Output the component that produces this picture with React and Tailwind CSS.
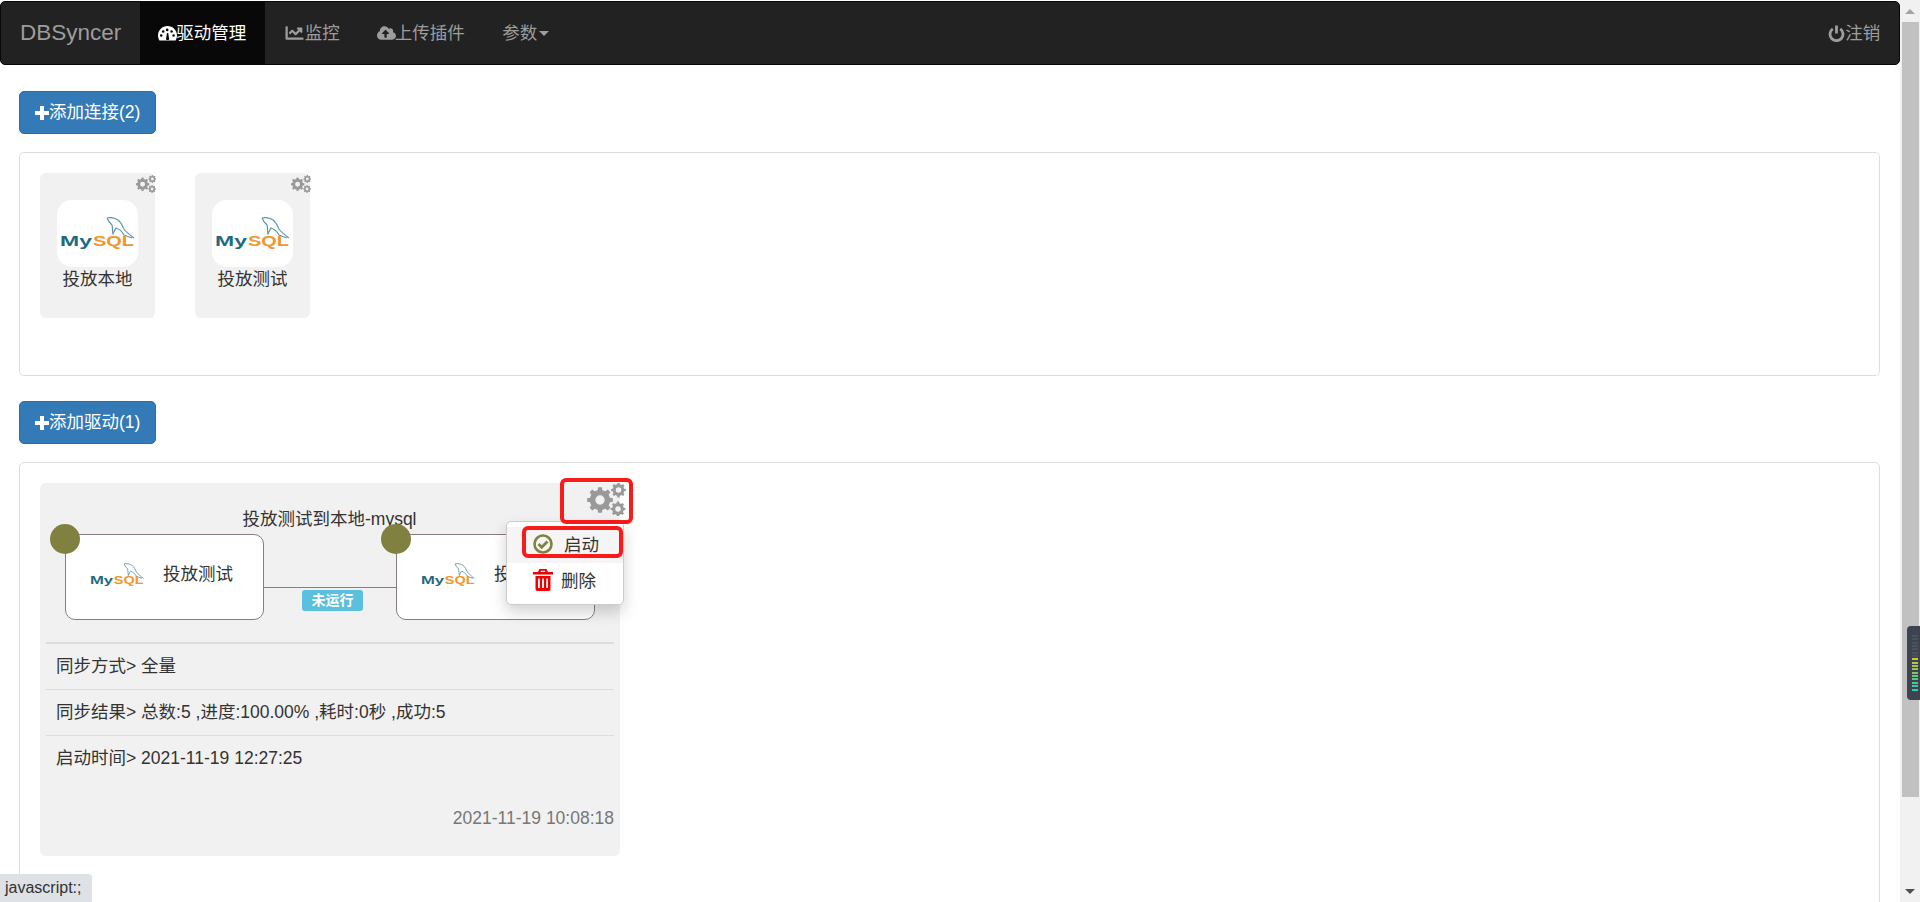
import { FaChartLine, FaCloudUploadAlt } from 'react-icons/fa';

const gearPath = (cx, cy, r, teeth) => {
  const pts = [];
  const step = (Math.PI * 2) / teeth;
  for (let i = 0; i < teeth; i++) {
    const a = i * step;
    const rows = [
      [r * 0.78, a - step * 0.5],
      [r * 0.78, a - step * 0.3],
      [r, a - step * 0.18],
      [r, a + step * 0.18],
      [r * 0.78, a + step * 0.3],
    ];
    rows.forEach(([d, t]) => pts.push(`${(cx + d * Math.cos(t)).toFixed(2)} ${(cy + d * Math.sin(t)).toFixed(2)}`));
  }
  const h = r * 0.36;
  return `M${pts.join('L')}Z M${cx - h} ${cy}a${h} ${h} 0 1 0 ${h * 2} 0a${h} ${h} 0 1 0 ${-h * 2} 0Z`;
};

const CogsIcon = ({ className }) => (
  <svg className={className} viewBox="0 0 38 33" fill="#999">
    <path fillRule="evenodd" d={gearPath(12.5, 17, 13, 8)} />
    <path fillRule="evenodd" d={gearPath(31, 7, 7.5, 8)} />
    <path fillRule="evenodd" d={gearPath(30.5, 26, 7.5, 8)} />
  </svg>
);

const MysqlLogo = ({ className }) => (
  <svg className={className} viewBox="0 0 76 34" fill="none">
    {/* dolphin */}
    <path
      d="M47 1c4-1 8 0 11 2 3 2 4 5 6 9 2 3 6 6 10 9M47 1c1 3 3 5 5 7 1 3 0 6 1 9 1-2 2-5 3-6 3 1 6 3 8 7 2 1 5 2 8 3"
      stroke="#5f9aa8"
      strokeWidth="1.2"
    />
    <text x="0" y="29" fill="#1f6a80" fontSize="14" fontWeight="700" textLength="32" lengthAdjust="spacingAndGlyphs" fontFamily="'Liberation Sans',sans-serif">My</text>
    <text x="33" y="29" fill="#f0962a" fontSize="14" fontWeight="700" textLength="41" lengthAdjust="spacingAndGlyphs" fontFamily="'Liberation Sans',sans-serif">SQL</text>
  </svg>
);

const DashboardIcon = () => (
  <svg className="w-[19px] h-[17px] -mx-[0.75px]" viewBox="0 0 19 17">
    <path
      fill="#fff"
      fillRule="evenodd"
      d="M9.5 1C4.3 1 0 5.2 0 10.4c0 1.8.5 3.5 1.4 5h16.2c.9-1.5 1.4-3.2 1.400-5C19 5.200 14.700 1 9.500 1zM3.200 9.200a1.300 1.300 0 1 1 0 2.600 1.300 1.300 0 0 1 0-2.600zm2-4a1.300 1.300 0 1 1 0 2.600 1.300 1.300 0 0 1 0-2.600zm4-1.600a1.300 1.300 0 1 1 0 2.600 1.300 1.300 0 0 1 0-2.600zm4.400 1.600a1.300 1.300 0 1 1 0 2.600 1.300 1.300 0 0 1 0-2.600zm2 4a1.300 1.300 0 1 1 0 2.600 1.300 1.300 0 0 1 0-2.600zM9 8h1.200l.8 5a1.500 1.500 0 1 1-2.800 0z"
    />
  </svg>
);

const PowerIcon = () => (
  <svg className="w-[17px] h-[17px]" viewBox="0 0 16 17" fill="none" stroke="#9d9d9d" strokeWidth="2.800">
    <path d="M4.300 3.800a6.500 6.500 0 1 0 7.400 0" />
    <path d="M8 0.500v8" />
  </svg>
);

const PlusIcon = () => (
  <svg className="w-[14px] h-[14px]" viewBox="0 0 14 14" fill="#fff">
    <path d="M5 0h4v5h5v4H9v5H5V9H0V5h5z" />
  </svg>
);

const CheckIcon = () => (
  <svg className="w-[20px] h-[20px] mb-[3px]" viewBox="0 0 20 20" fill="none" stroke="#808040">
    <circle cx="10" cy="10" r="8.500" strokeWidth="2.600" />
    <path d="M5.500 10l3.200 3.200 5.800-5.800" strokeWidth="2.800" />
  </svg>
);

const TrashIcon = () => (
  <svg className="w-[20px] h-[22px] mb-[2px]" viewBox="0 0 20 22" fill="#f00000">
    <path
      fillRule="evenodd"
      d="M6.500 0h7l1.500 3h5v2.500H0V3h5zM8 1.800L7.500 3h5L12 1.800zM2.500 7h15v13a2 2 0 0 1-2 2h-11a2 2 0 0 1-2-2zm2.500 2.500v9.500h1.800V9.500zm4.100 0v9.500h1.800V9.500zm4.100 0v9.500H15V9.500z"
    />
  </svg>
);

const NavItem = ({ icon, label, active, caret }) => (
  <a className={`flex items-center h-full px-[18.750px] ${active ? 'bg-[#080808] text-white' : 'text-[#9d9d9d]'}`}>
    {icon}
    <span>{label}</span>
    {caret && <span className="ml-[2px] border-x-[5px] border-t-[5px] border-x-transparent border-t-[#9d9d9d]"></span>}
  </a>
);

const AddButton = ({ label }) => (
  <button className="flex items-center h-[43px] w-[137px] pl-[15px] bg-[#337ab7] border border-[#2e6da4] rounded-[5px] text-white text-[17.500px]">
    <PlusIcon />
    <span>{label}</span>
  </button>
);

const ConnectorCard = ({ name }) => (
  <div className="relative w-[115px] h-[145px] bg-[#f1f1f1] rounded-[6px] pt-[27px] flex flex-col items-center">
    <CogsIcon className="absolute right-[-1px] top-[2px] w-[20px] h-[18px]" />
    <div className="w-[81px] h-[67px] bg-white rounded-[15px] flex items-center justify-center">
      <MysqlLogo className="w-[76px] h-[34px]" />
    </div>
    <div className="h-[25px] leading-[25px] text-[#333]">{name}</div>
  </div>
);

const DriverNode = ({ name }) => (
  <div className="relative w-[199px] h-[86px] bg-white border border-[#8c7d7d] rounded-[10px] flex items-center pl-[24px] gap-[18px]">
    <span className="absolute left-[-16px] top-[-11px] w-[30px] h-[30px] rounded-full bg-[#808040]"></span>
    <MysqlLogo className="w-[55px] h-[29px] mb-[4px]" />
    <span className="mb-[6px] text-[#333]">{name}</span>
  </div>
);

const InfoRow = ({ children, thick }) => (
  <div className={`pl-[10px] text-[#333] border-[#ddd] ${thick ? 'h-[47px] leading-[45px] border-t-2' : 'h-[46px] leading-[44px] border-t'}`}>{children}</div>
);

const VolumeMeter = () => {
  const colors = ['#4b525e', '#4b525e', '#4b525e', '#4b525e', '#4b525e', '#4b525e', '#4b525e', '#c9c63a', '#b9c43f', '#a8c347', '#97c352', '#83c463', '#6fc574', '#5cc686', '#4ac897', '#38caa6', '#28ccb2'];
  return (
    <div className="absolute right-0 top-[626px] w-[13px] h-[74px] bg-[#3d4450] rounded-l-[4px] flex flex-col gap-[1.350px] pt-[9px] pl-[5px]">
      {colors.map((c, i) => (
        <span key={i} className="block w-[6px] h-[2px]" style={{ backgroundColor: c }}></span>
      ))}
    </div>
  );
};

export default function App() {
  return (
    <div className="relative flex h-[902px] overflow-hidden bg-white text-[17.500px] font-['Liberation_Sans','Noto_Sans_CJK_SC',sans-serif]">
      <div className="w-[1900px] shrink-0 overflow-hidden">
        {/* Navbar */}
        <nav className="flex items-center justify-between mt-[1px] h-[64px] bg-[#222] border border-[#080808] rounded-[5px]">
          <div className="flex items-center h-full">
            <a className="w-[139px] pl-[19px] text-[22.500px] text-[#9d9d9d]">DBSyncer</a>
            <NavItem active icon={<DashboardIcon />} label="驱动管理" />
            <NavItem icon={<FaChartLine className="w-[21px] h-[18px]" />} label="监控" />
            <NavItem icon={<FaCloudUploadAlt className="w-[19px] h-[18px] -mx-[0.75px]" />} label="上传插件" />
            <NavItem label="参数" caret />
          </div>
          <NavItem icon={<PowerIcon />} label="注销" />
        </nav>

        <div className="pl-[19px] pr-[20px] pt-[26px]">
          <AddButton label="添加连接(2)" />
          <section className="mt-[18px] h-[224px] border border-[#ddd] rounded-[5px] pt-[20px] pl-[20px] flex gap-[40px] items-start">
            <ConnectorCard name="投放本地" />
            <ConnectorCard name="投放测试" />
          </section>

          <div className="mt-[25px]">
            <AddButton label="添加驱动(1)" />
          </div>
          <section className="mt-[18px] h-[500px] border border-[#ddd] rounded-[5px] pt-[20px] pl-[20px]">
            {/* Driver card */}
            <div className="relative w-[580px] h-[373px] bg-[#f1f1f1] rounded-[6px] px-[6px] pt-[24px] text-[#333]">
              <div className="h-[25px] leading-[25px] text-center pr-[1px]">投放测试到本地-mysql</div>
              <div className="flex items-start pl-[19px] mt-[2px]">
                <DriverNode name="投放测试" />
                <div className="relative w-[132px] h-px mt-[53px] bg-[#8c7d7d]">
                  <span className="absolute left-[38px] top-[3px] w-[61px] h-[21px] leading-[21px] rounded-[3px] bg-[#5bc0de] text-white text-center text-[14px] font-bold">未运行</span>
                </div>
                <DriverNode name="投放测试" />
              </div>
              <div className="mt-[22px]">
                <InfoRow thick>同步方式&gt; 全量</InfoRow>
                <InfoRow>同步结果&gt; 总数:5 ,进度:100.00% ,耗时:0秒 ,成功:5</InfoRow>
                <InfoRow>启动时间&gt; 2021-11-19 12:27:25</InfoRow>
              </div>
              <div className="text-right text-[#777] mt-[24px]">2021-11-19 10:08:18</div>

              <CogsIcon className="absolute left-[547px] top-[0px] w-[39px] h-[33px]" />

              {/* Dropdown menu */}
              <div className="absolute left-[466px] top-[38px] w-[118px] h-[84px] bg-white border border-[#ccc] rounded-[5px] shadow-[0_7px_15px_rgba(0,0,0,0.18)] pt-[5px]">
                <div className="flex items-center h-[36px] pl-[26px] bg-[#f5f5f5] text-[#333]">
                  <CheckIcon />
                  <span className="ml-[11px]">启动</span>
                </div>
                <div className="flex items-center h-[36px] pl-[26px] text-[#333]">
                  <TrashIcon />
                  <span className="ml-[8px]">删除</span>
                </div>
              </div>

              {/* Red annotation boxes */}
              <div className="absolute left-[520px] top-[-5px] w-[73px] h-[46px] border-[4px] border-[#fb1a1a] rounded-[6px]"></div>
              <div className="absolute left-[482px] top-[43px] w-[101px] h-[32px] border-[4px] border-[#fb1a1a] rounded-[6px]"></div>
            </div>
          </section>
        </div>
      </div>

      {/* Scrollbar */}
      <div className="w-[20px] shrink-0 bg-[#f1f1f1] flex flex-col items-center">
        <div className="h-[22px] flex items-center justify-center">
          <span className="border-x-[5px] border-b-[5px] border-x-transparent border-b-[#a3a3a3]"></span>
        </div>
        <div className="w-[17px] h-[775px] ml-[1px] bg-[#c1c1c1]"></div>
        <div className="flex-1 flex items-end pb-[8px]">
          <span className="border-x-[5px] border-t-[5px] border-x-transparent border-t-[#505050]"></span>
        </div>
      </div>
      <VolumeMeter />

      {/* Browser status bubble */}
      <div className="absolute left-0 bottom-0 w-[92px] h-[28px] leading-[28px] pl-[5px] bg-[#dee1e6] rounded-tr-[4px] text-[16px] text-[#333]">javascript:;</div>
    </div>
  );
}
